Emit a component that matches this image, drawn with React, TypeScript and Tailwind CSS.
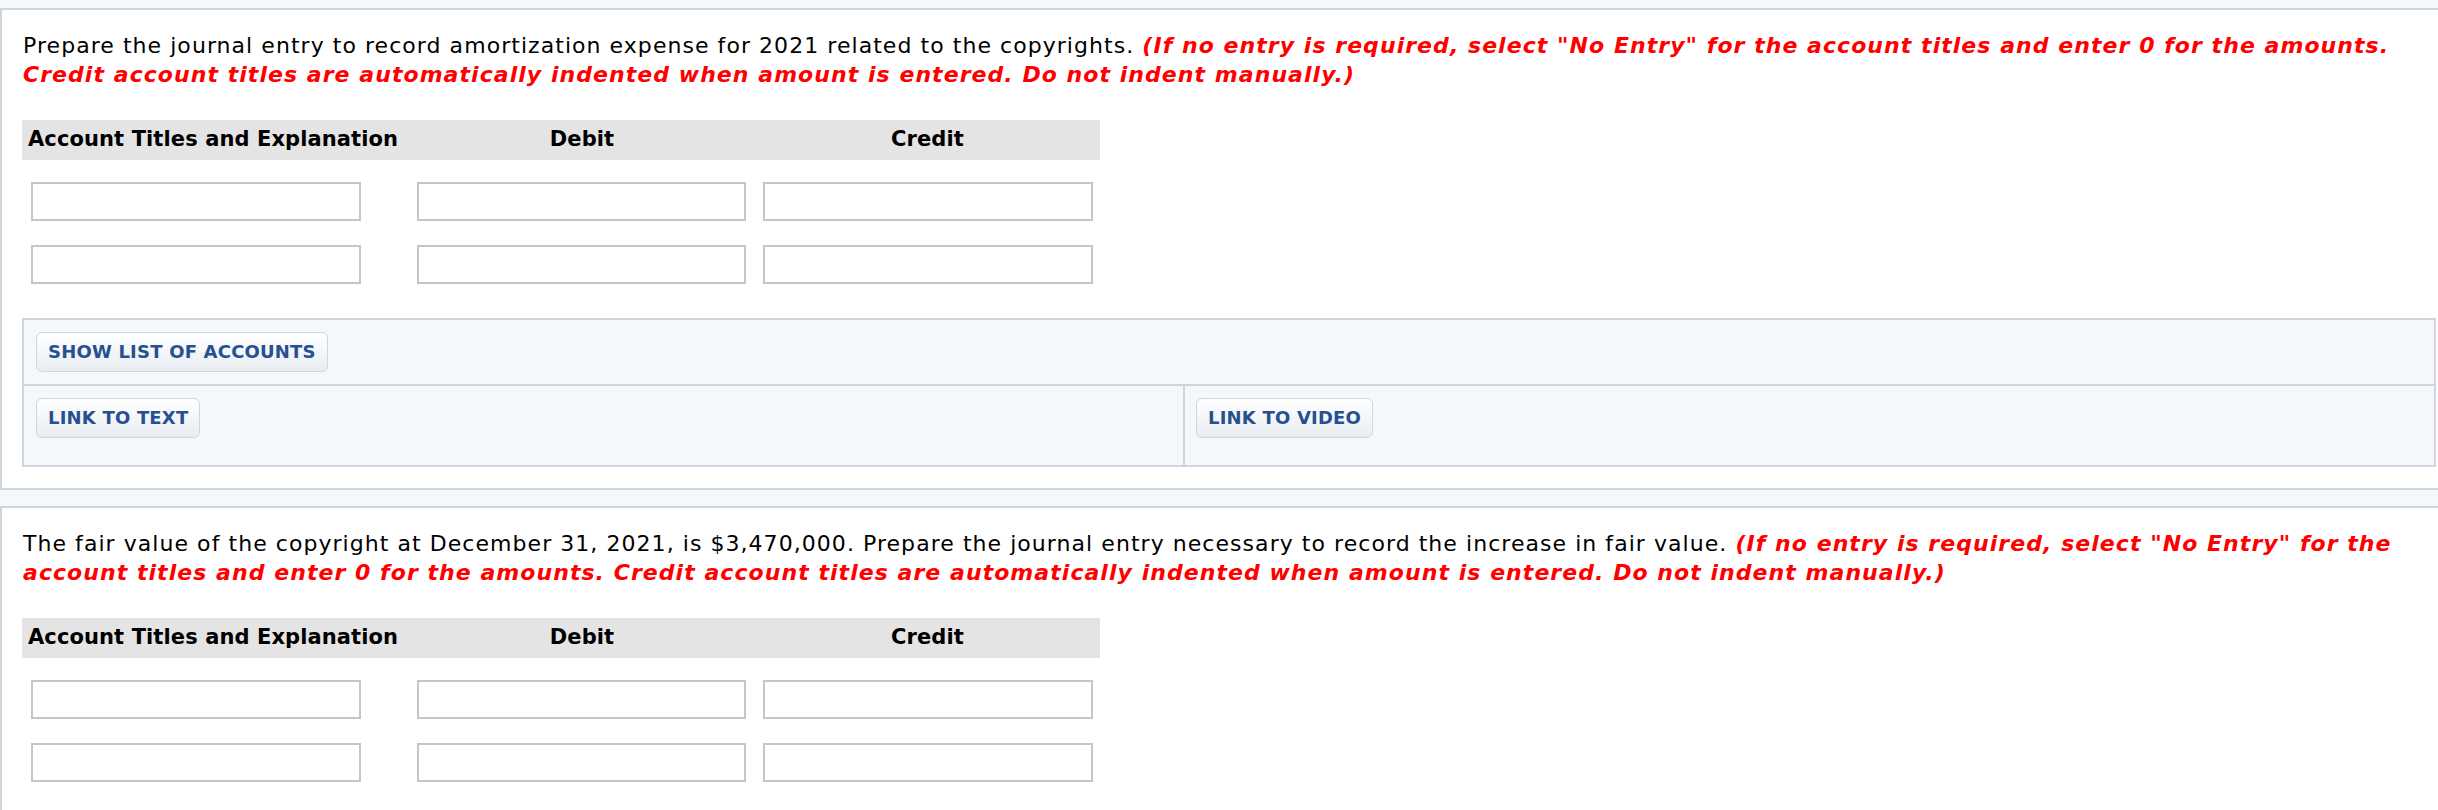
const font = { fontFamily: '"DejaVu Sans", Verdana, sans-serif' };

function ActionButton({ label }: { label: string }) {
  return (
    <button
      type="button"
      className="h-[40px] px-[11px] rounded-[6px] border border-[#cdd7e2] bg-gradient-to-b from-white to-[#e8edf2] text-[18px] font-bold text-[#26508f] leading-none tracking-[0.2px]"
    >
      {label}
    </button>
  );
}

function JournalTable() {
  const rows = [0, 1];
  return (
    <div className="w-[1078px]">
      <div className="grid grid-cols-[387px_346px_345px] h-[40px] items-center bg-[#e4e4e4] text-[21px] font-bold text-black tracking-[0.1px]">
        <div className="pl-[6px]">Account Titles and Explanation</div>
        <div className="text-center">Debit</div>
        <div className="text-center">Credit</div>
      </div>
      <div className="mt-[22px] flex flex-col gap-[24px]">
        {rows.map((r) => (
          <div key={r} className="grid grid-cols-[387px_346px_345px]">
            <div className="pl-[9px]">
              <input type="text" className="w-[330px] h-[39px] bg-white border-2 border-[#c6c6c6] outline-none" />
            </div>
            <div className="pl-[8px]">
              <input type="text" className="w-[329px] h-[39px] bg-white border-2 border-[#c6c6c6] outline-none" />
            </div>
            <div className="pl-[8px]">
              <input type="text" className="w-[330px] h-[39px] bg-white border-2 border-[#c6c6c6] outline-none" />
            </div>
          </div>
        ))}
      </div>
    </div>
  );
}

function Prompt({ children }: { children: React.ReactNode }) {
  return (
    <p className="pl-[1px] text-[22px] leading-[29px] tracking-[1.05px] text-black whitespace-nowrap">{children}</p>
  );
}

function Note({ children }: { children: React.ReactNode }) {
  return <span className="font-bold italic text-[#ff0000]">{children}</span>;
}

export default function App() {
  return (
    <div className="w-[2438px] h-[810px] overflow-hidden bg-[#f5f8fb] pt-[8px]" style={font}>
      <div className="w-[2458px] bg-white border-2 border-[#cdd5df] pl-[20px] pr-[20px] pt-[21px] pb-[21px]">
        <Prompt>
          Prepare the journal entry to record amortization expense for 2021 related to the copyrights.{' '}
          <Note>
            (If no entry is required, select "No Entry" for the account titles and enter 0 for the amounts.
            <br />
            Credit account titles are automatically indented when amount is entered. Do not indent manually.)
          </Note>
        </Prompt>
        <div className="mt-[31px]">
          <JournalTable />
        </div>
        <div className="mt-[34px] border-2 border-[#cdd5df] bg-[#f5f8fb]">
          <div className="px-[12px] py-[12px] border-b-2 border-[#cdd5df]">
            <ActionButton label="SHOW LIST OF ACCOUNTS" />
          </div>
          <div className="flex">
            <div className="w-[1161px] px-[12px] pt-[12px] pb-[27px] border-r-2 border-[#cdd5df]">
              <ActionButton label="LINK TO TEXT" />
            </div>
            <div className="flex-1 px-[11px] pt-[12px] pb-[27px]">
              <ActionButton label="LINK TO VIDEO" />
            </div>
          </div>
        </div>
      </div>

      <div className="mt-[16px] w-[2458px] bg-white border-2 border-[#cdd5df] pl-[20px] pr-[20px] pt-[21px] pb-[40px]">
        <Prompt>
          The fair value of the copyright at December 31, 2021, is $3,470,000. Prepare the journal entry necessary to record the increase in fair value.{' '}
          <Note>
            (If no entry is required, select "No Entry" for the
            <br />
            account titles and enter 0 for the amounts. Credit account titles are automatically indented when amount is entered. Do not indent manually.)
          </Note>
        </Prompt>
        <div className="mt-[31px]">
          <JournalTable />
        </div>
      </div>
    </div>
  );
}
